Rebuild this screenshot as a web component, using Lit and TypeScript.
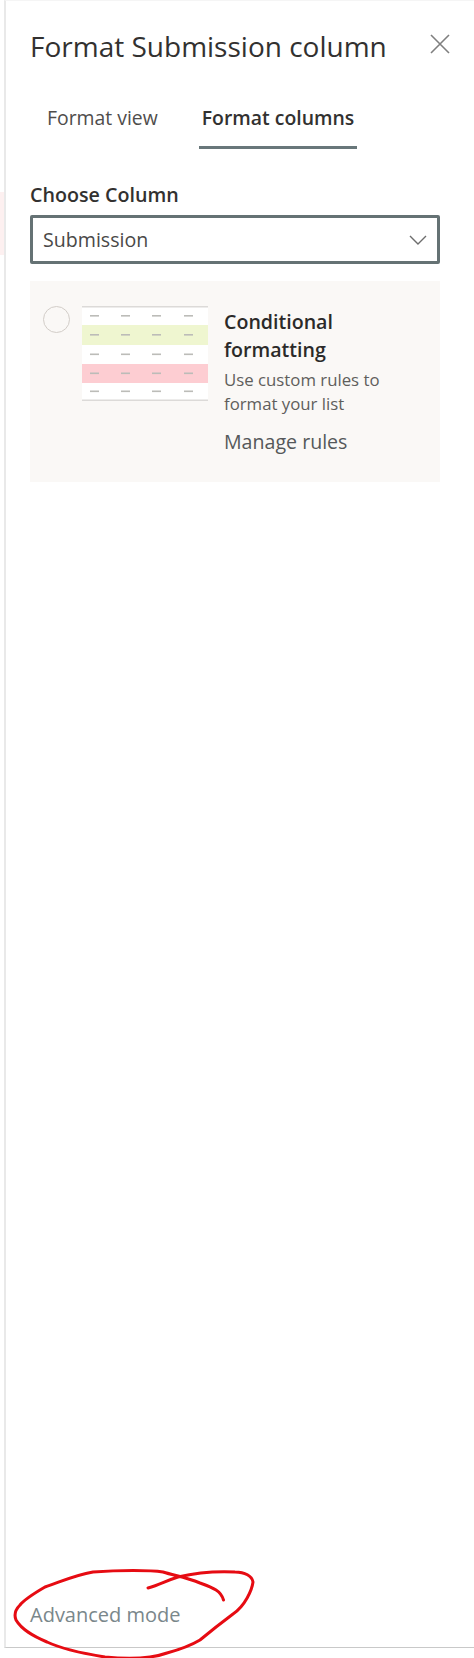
import { LitElement, html, css, svg } from "lit";
import { customElement } from "lit/decorators.js";

const ROWS = [
  { y: 307, h: 18, fill: "#ffffff" },
  { y: 325, h: 20, fill: "#eff6d0" },
  { y: 345, h: 19, fill: "#ffffff" },
  { y: 364, h: 19, fill: "#fdcdd2" },
  { y: 383, h: 17, fill: "#ffffff" },
];
const COLS = [8, 39, 70, 102];

@customElement("app-root")
export class AppRoot extends LitElement {
  static styles = css`
    :host {
      display: block;
      position: relative;
      width: 474px;
      height: 1658px;
      overflow: hidden;
      background: #fff;
      font-family: "Open Sans", "Noto Sans", sans-serif;
      color: #2b2a29;
    }
    .page {
      display: flex;
      height: 1658px;
    }
    .gutter {
      width: 4px;
      flex: none;
      padding-top: 192px;
    }
    .gutter div {
      height: 63px;
      background: #fdf0f0;
    }
    .panel {
      flex: 1;
      height: 1648px;
      box-sizing: border-box;
      border-left: 2px solid #e9e9e9;
      border-top: 1px solid #f5f5f5;
      border-bottom: 1px solid #c9c9c9;
      padding: 0 34px 0 24px;
      display: flex;
      flex-direction: column;
    }
    .head {
      display: flex;
      justify-content: space-between;
      padding-top: 26px;
      height: 69px;
      box-sizing: border-box;
    }
    h1 {
      margin: 0;
      font-size: 28px;
      line-height: 38px;
      font-weight: 400;
      letter-spacing: 0;
      color: #323130;
      white-space: nowrap;
    }
    .close {
      width: 20px;
      height: 20px;
      margin: 7px -10px 0 0;
      flex: none;
    }
    .tabs {
      display: flex;
      gap: 44px;
      padding: 31px 0 0 17px;
      height: 80px;
      box-sizing: border-box;
      font-size: 19.4px;
      line-height: 34px;
      white-space: nowrap;
    }
    .tab {
      color: #4f4d4b;
    }
    .tab.on {
      font-weight: 600;
      color: #323130;
      position: relative;
    }
    .tab.on::after {
      content: "";
      position: absolute;
      left: -3px;
      right: -3px;
      top: 45px;
      height: 3px;
      background: #68777a;
    }
    .label {
      font-size: 19.7px;
      font-weight: 600;
      line-height: 28px;
      margin-top: 31px;
      color: #323130;
      white-space: nowrap;
    }
    .select {
      margin-top: 6px;
      height: 49px;
      box-sizing: border-box;
      border: 3px solid #657274;
      border-radius: 2px;
      display: flex;
      align-items: center;
      justify-content: space-between;
      padding: 0 10px 0 10px;
      font-size: 19.6px;
      color: #4a4948;
    }
    .card {
      margin-top: 17px;
      height: 201px;
      background: #faf8f6;
      display: flex;
      position: relative;
      padding: 25px 0 0 52px;
      box-sizing: border-box;
      gap: 16px;
    }
    .radio {
      position: absolute;
      left: 13px;
      top: 25px;
      width: 27px;
      height: 27px;
      box-sizing: border-box;
      border: 1.5px solid #d2cdc8;
      border-radius: 50%;
    }
    .thumb {
      width: 126px;
      height: 96px;
      flex: none;
    }
    .txt {
      padding-top: 2px;
    }
    .t1 {
      font-size: 19.6px;
      line-height: 28px;
      font-weight: 600;
      color: #2b2a29;
    }
    .t2 {
      font-size: 16.8px;
      line-height: 24px;
      color: #605e5c;
      margin-top: 4px;
    }
    .t3 {
      font-size: 19.6px;
      line-height: 28px;
      color: #55585a;
      margin-top: 12px;
    }
    .adv {
      margin-top: auto;
      margin-bottom: 18px;
      font-size: 20px;
      line-height: 28px;
      color: #7a878b;
    }
    .scribble {
      position: absolute;
      left: 0;
      top: 1540px;
      width: 474px;
      height: 118px;
      pointer-events: none;
    }
  `;

  render() {
    return html`
      <div class="page">
        <div class="gutter"><div></div></div>
        <div class="panel">
          <div class="head">
            <h1>Format Submission column</h1>
            <svg class="close" viewBox="0 0 20 20" fill="none" stroke="#7f7f7f" stroke-width="1.6">
              <path d="M1 1 L19 19 M19 1 L1 19" />
            </svg>
          </div>
          <div class="tabs">
            <span class="tab">Format view</span>
            <span class="tab on">Format columns</span>
          </div>
          <div class="label">Choose Column</div>
          <div class="select">
            <span>Submission</span>
            <svg width="18" height="10" viewBox="0 0 18 10" fill="none" stroke="#6d6d6d" stroke-width="1.4">
              <path d="M1 1 L9 9 L17 1" />
            </svg>
          </div>
          <div class="card">
            <div class="radio"></div>
            <svg class="thumb" viewBox="0 306 126 96">
              ${ROWS.map(
                (r) => svg`<rect x="0" y=${r.y} width="126" height=${r.h} fill=${r.fill} />
                  ${COLS.map(
                    (c) => svg`<rect x=${c} y=${r.y + r.h / 2 - 1} width="9" height="1.6" fill="#bcbcb8" />`
                  )}`
              )}
              <rect x="0" y="306" width="126" height="1.5" fill="#dcdad8" />
              <rect x="0" y="399.5" width="126" height="1.5" fill="#dcdad8" />
            </svg>
            <div class="txt">
              <div class="t1">Conditional<br />formatting</div>
              <div class="t2">Use custom rules to<br />format your list</div>
              <div class="t3">Manage rules</div>
            </div>
          </div>
          <div class="adv">Advanced mode</div>
        </div>
      </div>
      <svg class="scribble" viewBox="0 0 474 118" fill="none" stroke="#e60b12" stroke-width="3" stroke-linecap="round" stroke-linejoin="round">
        <path d="M223.5 60 C221 51 214 48 200 43 C185 37 176 36 163 32 C150 30 120 30 93 32 C75 35 60 42 45 47 C33 54 24 60 20 65 C15 70 14 75 16 80 C22 90 33 96 47 102 C60 108 80 113 105 117 C125 119 150 119 167 113 C178 110 190 106 200 100 C212 90 225 80 233 74 C245 66 252 50 253 42 C252 36 245 32 235 32 C215 31 195 33 178 37 C165 41 160 45 148 48" />
      </svg>
    `;
  }
}
